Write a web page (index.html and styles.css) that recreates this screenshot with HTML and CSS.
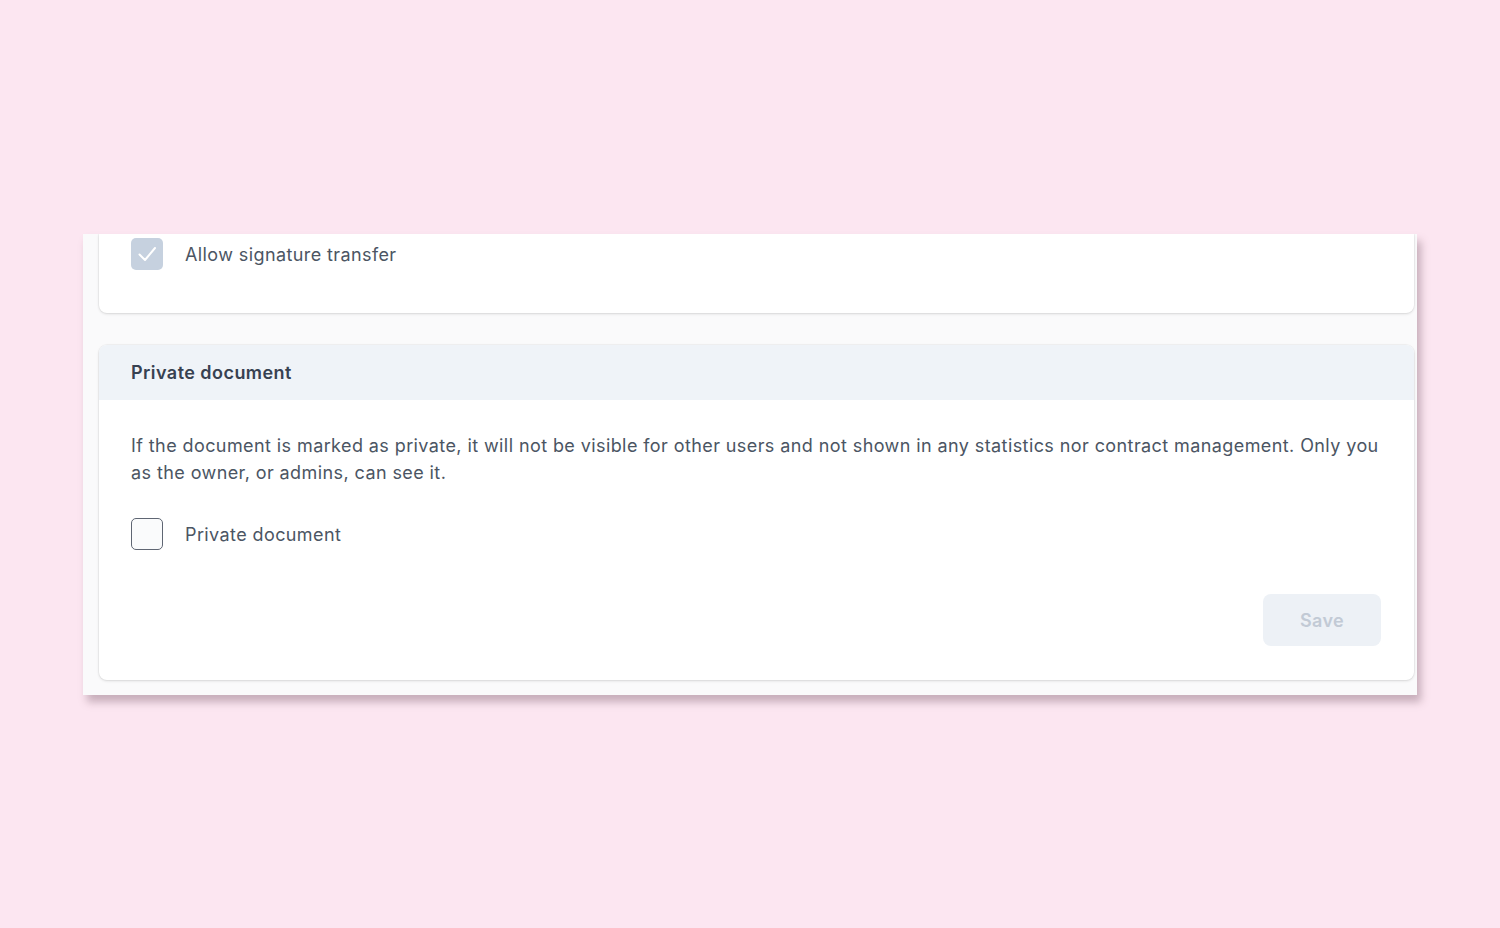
FILE: index.html
```html
<!DOCTYPE html>
<html lang="en">
<head>
<meta charset="utf-8">
<title>Private document</title>
<link rel="stylesheet" href="styles.css">
</head>
<body>
<div class="page">
  <div class="frame">
    <div class="card card-top">
      <label class="check-row">
        <span class="checkbox checked">
          <svg viewBox="0 0 32 32" width="32" height="32"><path d="M8.5 16.5l5.5 5.5 10-12" fill="none" stroke="#fff" stroke-width="2" stroke-linecap="round" stroke-linejoin="round"/></svg>
        </span>
        <span class="check-label">Allow signature transfer</span>
      </label>
    </div>
    <div class="card card-private">
      <div class="card-header">Private document</div>
      <div class="card-body">
        <p class="desc">If the document is marked as private, it will not be visible for other users and not shown in any statistics nor contract management. Only you as the owner, or admins, can see it.</p>
        <label class="check-row">
          <span class="checkbox"></span>
          <span class="check-label">Private document</span>
        </label>
        <div class="actions">
          <button class="btn-save" disabled>Save</button>
        </div>
      </div>
    </div>
  </div>
</div>
</body>
</html>
```

FILE: styles.css
```css
html, body {
  margin: 0;
  padding: 0;
}
body {
  background: #fce6f1;
  font-family: Inter, "Noto Sans", "Liberation Sans", sans-serif;
  color: #4b5563;
}
.page {
  height: 928px;
  padding: 234px 0 0 83px;
  box-sizing: border-box;
}
.frame {
  width: 1334px;
  height: 461px;
  box-sizing: border-box;
  background: #fafafb;
  padding: 0 3px 15px 16px;
  display: flex;
  flex-direction: column;
  gap: 32px;
  overflow: hidden;
  box-shadow: 4px 7px 8px rgba(120, 90, 105, 0.4);
}
.card {
  background: #fff;
  border-radius: 8px;
  box-shadow: 0 1px 3px rgba(0, 0, 0, 0.12), 0 0 0 1px rgba(0, 0, 0, 0.03);
}
.card-top {
  border-radius: 0 0 8px 8px;
  height: 79px;
  box-sizing: border-box;
  padding: 4px 32px 0;
}
.check-row {
  display: flex;
  align-items: center;
  gap: 22px;
}
.checkbox {
  width: 32px;
  height: 32px;
  box-sizing: border-box;
  border: 1.5px solid #5f6673;
  border-radius: 5px;
  background: #fafbfc;
  flex: none;
  display: block;
}
.checkbox.checked {
  border: none;
  background: #c6d1df;
}
.checkbox svg {
  display: block;
}
.check-label {
  font-size: 18px;
  letter-spacing: 0.4px;
  color: #4b5563;
}
.card-private {
  flex: none;
  height: 335px;
  overflow: hidden;
}
.card-header {
  height: 55px;
  background: #eff3f8;
  padding: 0 32px;
  display: flex;
  align-items: center;
  font-size: 18px;
  font-weight: 600;
  letter-spacing: 0.45px;
  color: #374151;
}
.card-body {
  padding: 32px 32px 34px;
}
.desc {
  margin: 0 -4px 32px 0;
  font-size: 18px;
  line-height: 27px;
  letter-spacing: 0.41px;
  color: #4b5563;
}
.actions {
  display: flex;
  justify-content: flex-end;
  margin-top: 44px;
  padding-right: 1px;
}
.btn-save {
  width: 118px;
  height: 52px;
  border: none;
  border-radius: 8px;
  background: #edf1f6;
  color: #c2cad5;
  font-family: inherit;
  font-size: 18px;
  font-weight: 600;
  letter-spacing: 0.4px;
}
```
